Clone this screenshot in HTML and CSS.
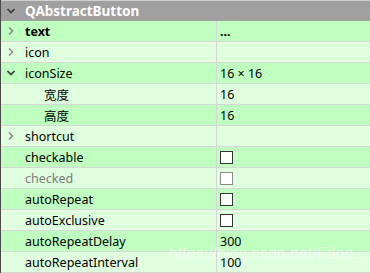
FILE: index.html
```html
<!DOCTYPE html>
<html>
<head>
<meta charset="utf-8">
<link rel="stylesheet" href="styles.css">
</head>
<body>
<div class="panel">
  <div class="header">
    <svg class="chev" width="10" height="10" viewBox="0 0 10 10"><path d="M1.5 3 L5 6.5 L8.5 3" fill="none" stroke="#3a3a3a" stroke-width="1.7"/></svg>
    <span class="htitle">QAbstractButton</span>
  </div>
  <div class="row dark">
    <div class="name"><svg class="chev" width="10" height="10" viewBox="0 0 10 10"><path d="M3 1.5 L6.5 5 L3 8.5" fill="none" stroke="#8c8c8c" stroke-width="1.7"/></svg><span class="bold">text</span></div>
    <div class="val"><span class="bold">...</span></div>
  </div>
  <div class="row light">
    <div class="name"><svg class="chev" width="10" height="10" viewBox="0 0 10 10"><path d="M3 1.5 L6.5 5 L3 8.5" fill="none" stroke="#8c8c8c" stroke-width="1.7"/></svg><span>icon</span></div>
    <div class="val"></div>
  </div>
  <div class="row dark">
    <div class="name"><svg class="chev" width="10" height="10" viewBox="0 0 10 10"><path d="M1.5 3 L5 6.5 L8.5 3" fill="none" stroke="#3a3a3a" stroke-width="1.7"/></svg><span>iconSize</span></div>
    <div class="val">16 × 16</div>
  </div>
  <div class="row light">
    <div class="name child"><span>宽度</span></div>
    <div class="val">16</div>
  </div>
  <div class="row dark">
    <div class="name child"><span>高度</span></div>
    <div class="val">16</div>
  </div>
  <div class="row light">
    <div class="name"><svg class="chev" width="10" height="10" viewBox="0 0 10 10"><path d="M3 1.5 L6.5 5 L3 8.5" fill="none" stroke="#8c8c8c" stroke-width="1.7"/></svg><span>shortcut</span></div>
    <div class="val"></div>
  </div>
  <div class="row dark">
    <div class="name"><span class="pad">checkable</span></div>
    <div class="val"><span class="box"></span></div>
  </div>
  <div class="row light">
    <div class="name"><span class="pad dim">checked</span></div>
    <div class="val"><span class="box off"></span></div>
  </div>
  <div class="row dark">
    <div class="name"><span class="pad">autoRepeat</span></div>
    <div class="val"><span class="box"></span></div>
  </div>
  <div class="row light">
    <div class="name"><span class="pad">autoExclusive</span></div>
    <div class="val"><span class="box"></span></div>
  </div>
  <div class="row dark">
    <div class="name"><span class="pad">autoRepeatDelay</span></div>
    <div class="val">300</div>
  </div>
  <div class="row light">
    <div class="name"><span class="pad">autoRepeatInterval</span></div>
    <div class="val">100</div>
  </div>
  <div class="watermark">https://blog.csdn.net/Fdog_</div>
</div>
</body>
</html>
```
FILE: styles.css
```css
html, body {
  margin: 0;
  padding: 0;
  background: #ffffff;
}
.panel {
  position: relative;
  width: 369px;
  height: 273px;
  overflow: hidden;
  border-left: 1px solid #4a4a4a;
  font-family: "Noto Sans", "Noto Sans CJK SC", sans-serif;
  font-size: 12.5px;
  color: #000000;
}
.header {
  height: 20px;
  border-top: 1px solid #d0d0d0;
  background: #a0a0a0;
  display: flex;
  align-items: center;
  padding-left: 5px;
}
.htitle {
  color: #ffffff;
  font-weight: bold;
  margin-left: 9px;
  font-size: 13.5px;
}
.row {
  display: grid;
  grid-template-columns: 216px 1fr;
  height: 20px;
  border-bottom: 1px solid #d6d6d6;
}
.dark { background: #bfffbf; }
.light { background: #dfffdf; }
.name {
  display: flex;
  align-items: center;
  padding-left: 5px;
  border-right: 1px solid #d6d6d6;
  white-space: nowrap;
}
.name .chev { flex: none; }
.name span { margin-left: 9px; }
.name span.pad { margin-left: 19px; }
.name.child span { margin-left: 38px; }
.bold { font-weight: bold; }
.dim { color: #7a7a7a; }
.val {
  display: flex;
  align-items: center;
  padding-left: 3px;
}
.box {
  width: 11px;
  height: 11px;
  border: 1px solid #333333;
  background: #ffffff;
  margin-top: 1px;
}
.box.off { border-color: #8a8a8a; }
.watermark {
  position: absolute;
  left: 168px;
  top: 245px;
  font-family: "Liberation Sans", sans-serif;
  font-size: 16px;
  color: rgba(255, 255, 255, 0.55);
  white-space: nowrap;
  pointer-events: none;
}
```
